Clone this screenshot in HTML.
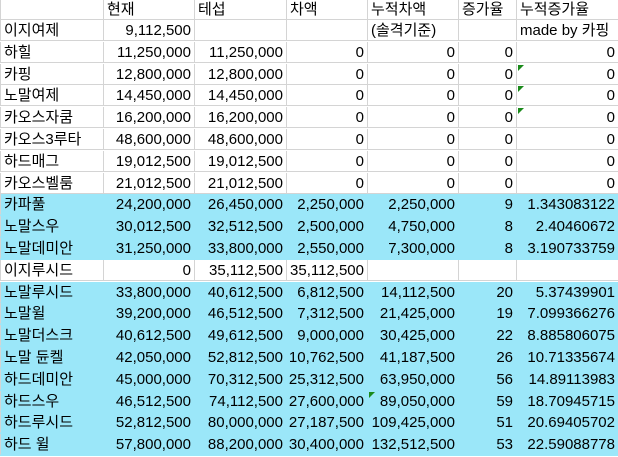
<!DOCTYPE html>
<html><head><meta charset="utf-8"><style>
body{margin:0;width:618px;height:457px;overflow:hidden;background:#fff;font-family:"Liberation Sans","Noto Sans CJK KR",sans-serif;font-size:15px;color:#000;position:relative}
.r{position:absolute;left:0;width:618px;height:22px;display:flex}
.r div{height:21px;line-height:21px;white-space:nowrap;box-sizing:border-box;text-align:right;padding-right:3px;border-right:1px solid #d4d4d4;border-bottom:1px solid #d4d4d4;position:relative}
.b{background:#9be7f9}
.b div{border-color:transparent}
.r div:nth-child(1){width:104px;text-align:left;padding-left:3px;border-left:1px solid #d4d4d4}
.r div:nth-child(2){width:91px}
.r div:nth-child(3){width:92px}
.r div:nth-child(4){width:81px}
.r div:nth-child(5){width:91px}
.r div:nth-child(6){width:58px}
.r div:nth-child(7){width:101px;border-right:none}
.h div{text-align:left;padding-left:3px}
.h div.n{text-align:right;padding-left:0}
.t::before{content:"";position:absolute;left:1px;top:1px;border-top:6px solid #1a8a1a;border-right:6px solid transparent}
</style></head><body>
<div class="r h" style="top:-1px"><div></div><div>현재</div><div>테섭</div><div>차액</div><div>누적차액</div><div>증가율</div><div>누적증가율</div></div>
<div class="r h" style="top:20px"><div>이지여제</div><div class="n">9,112,500</div><div></div><div></div><div>(솔격기준)</div><div></div><div>made by 카핑</div></div>
<div class="r" style="top:42px"><div>하힐</div><div>11,250,000</div><div>11,250,000</div><div>0</div><div>0</div><div>0</div><div>0</div></div>
<div class="r" style="top:64px"><div>카핑</div><div>12,800,000</div><div>12,800,000</div><div>0</div><div>0</div><div>0</div><div class="t">0</div></div>
<div class="r" style="top:85px"><div>노말여제</div><div>14,450,000</div><div>14,450,000</div><div>0</div><div>0</div><div>0</div><div class="t">0</div></div>
<div class="r" style="top:107px"><div>카오스자쿰</div><div>16,200,000</div><div>16,200,000</div><div>0</div><div>0</div><div>0</div><div class="t">0</div></div>
<div class="r" style="top:129px"><div>카오스3루타</div><div>48,600,000</div><div>48,600,000</div><div>0</div><div>0</div><div>0</div><div>0</div></div>
<div class="r" style="top:151px"><div>하드매그</div><div>19,012,500</div><div>19,012,500</div><div>0</div><div>0</div><div>0</div><div>0</div></div>
<div class="r" style="top:173px"><div>카오스벨룸</div><div>21,012,500</div><div>21,012,500</div><div>0</div><div>0</div><div>0</div><div>0</div></div>
<div class="r b" style="top:194px"><div>카파풀</div><div>24,200,000</div><div>26,450,000</div><div>2,250,000</div><div>2,250,000</div><div>9</div><div>1.343083122</div></div>
<div class="r b" style="top:216px"><div>노말스우</div><div>30,012,500</div><div>32,512,500</div><div>2,500,000</div><div>4,750,000</div><div>8</div><div>2.40460672</div></div>
<div class="r b" style="top:238px"><div>노말데미안</div><div>31,250,000</div><div>33,800,000</div><div>2,550,000</div><div>7,300,000</div><div>8</div><div>3.190733759</div></div>
<div class="r" style="top:260px"><div>이지루시드</div><div>0</div><div>35,112,500</div><div>35,112,500</div><div></div><div></div><div></div></div>
<div class="r b" style="top:282px"><div>노말루시드</div><div>33,800,000</div><div>40,612,500</div><div>6,812,500</div><div>14,112,500</div><div>20</div><div>5.37439901</div></div>
<div class="r b" style="top:303px"><div>노말윌</div><div>39,200,000</div><div>46,512,500</div><div>7,312,500</div><div>21,425,000</div><div>19</div><div>7.099366276</div></div>
<div class="r b" style="top:325px"><div>노말더스크</div><div>40,612,500</div><div>49,612,500</div><div>9,000,000</div><div>30,425,000</div><div>22</div><div>8.885806075</div></div>
<div class="r b" style="top:347px"><div>노말 듄켈</div><div>42,050,000</div><div>52,812,500</div><div>10,762,500</div><div>41,187,500</div><div>26</div><div>10.71335674</div></div>
<div class="r b" style="top:369px"><div>하드데미안</div><div>45,000,000</div><div>70,312,500</div><div>25,312,500</div><div>63,950,000</div><div>56</div><div>14.89113983</div></div>
<div class="r b" style="top:391px"><div>하드스우</div><div>46,512,500</div><div>74,112,500</div><div>27,600,000</div><div class="t">89,050,000</div><div>59</div><div>18.70945715</div></div>
<div class="r b" style="top:412px"><div>하드루시드</div><div>52,812,500</div><div>80,000,000</div><div>27,187,500</div><div>109,425,000</div><div>51</div><div>20.69405702</div></div>
<div class="r b" style="top:434px"><div>하드 윌</div><div>57,800,000</div><div>88,200,000</div><div>30,400,000</div><div>132,512,500</div><div>53</div><div>22.59088778</div></div>
</body></html>
